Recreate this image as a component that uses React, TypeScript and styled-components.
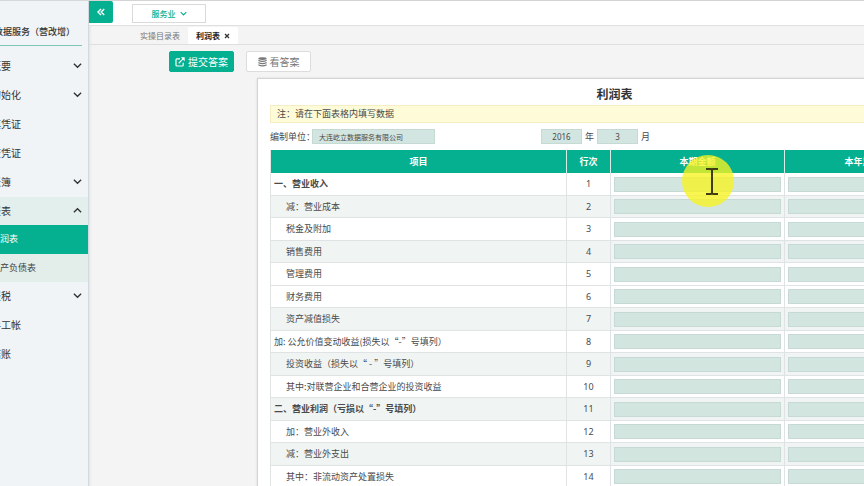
import React from "react";
import styled, { createGlobalStyle } from "styled-components";

const green = "#04b08f";
const line = "#e0e3e3";

const Global = createGlobalStyle`
  * { box-sizing: border-box; }
  html, body, #root { height: 100%; }
  body {
    margin: 0;
    overflow: hidden;
    background: #f4f4f4;
    color: #4a4a4a;
    font-family: "Noto Sans CJK SC", "Noto Sans", sans-serif;
    font-size: 9px;
  }
  button, input { font: inherit; color: inherit; }
`;

const Shell = styled.div`
  display: flex;
  min-height: 100%;
  border-top: 1px solid #d4d4d4;
`;

const Sidebar = styled.aside`
  flex: none;
  width: 89px;
  display: flex;
  justify-content: flex-end;
  overflow: hidden;
  background: #f0f4f7;
  border-right: 1px solid #d3d9dc;
  box-shadow: 1px 0 2px #dde0e2;
`;

const SidebarInner = styled.div`
  flex: none;
  width: 150px;
`;

const Company = styled.h1`
  margin: 0 6px 6px 0;
  height: 45px;
  padding: 17px 0 0 20px;
  border-bottom: 1px solid #7cc7b6;
  font-size: 9px;
  line-height: 28px;
  font-weight: 500;
  color: #333;
  white-space: nowrap;
`;

const Menu = styled.nav`
  display: flex;
  flex-direction: column;
`;

const menuRow = `
  display: flex;
  align-items: center;
  justify-content: space-between;
  width: 100%;
  padding: 0 6px 2px 53px;
  border: 0;
  text-decoration: none;
  white-space: nowrap;
`;

const MenuButton = styled.button<{ $open?: boolean }>`
  ${menuRow}
  height: ${(p) => (p.$open ? 28 : 29)}px;
  background: ${(p) => (p.$open ? "#e3efed" : "transparent")};
  font-size: 10px;
  color: #333;
`;

const MenuLink = styled.a`
  ${menuRow}
  height: 29px;
  font-size: 10px;
  color: #333;
`;

const SubLink = styled.a<{ $active?: boolean }>`
  ${menuRow}
  height: ${(p) => (p.$active ? 29 : 28)}px;
  font-size: 9px;
  background: ${(p) => (p.$active ? green : "#e3eeea")};
  color: ${(p) => (p.$active ? "#fff" : "#444")};
`;

const Main = styled.main`
  position: relative;
  flex: 1;
  min-width: 0;
  overflow: hidden;
`;

const TopBar = styled.header`
  display: flex;
  align-items: center;
  height: 24px;
  gap: 19px;
  background: #fff;
`;

const Collapse = styled.button`
  display: flex;
  align-items: center;
  justify-content: center;
  align-self: flex-start;
  width: 24px;
  height: 22px;
  padding: 0;
  border: 0;
  border-radius: 0 2px 2px 0;
  background: ${green};
  color: #fff;
`;

const Industry = styled.button`
  display: flex;
  align-items: center;
  justify-content: center;
  gap: 4px;
  width: 74px;
  height: 19px;
  padding: 0;
  border: 1px solid #dadada;
  background: #fff;
  font-size: 8px;
  font-weight: 500;
  color: ${green};
`;

const Tabs = styled.nav`
  display: flex;
  align-items: flex-end;
  height: 20px;
  padding-left: 43px;
  border-top: 1px solid #e0e0e0;
  border-bottom: 1px solid #dedede;
`;

const Tab = styled.div<{ $active?: boolean }>`
  display: flex;
  align-items: center;
  gap: 4px;
  height: 17px;
  padding: 0 8px;
  border-radius: 2px 2px 0 0;
  background: ${(p) => (p.$active ? "#fff" : "transparent")};
  font-size: 8px;
  font-weight: ${(p) => (p.$active ? 700 : 400)};
`;

const TabLink = styled.a<{ $active?: boolean }>`
  color: ${(p) => (p.$active ? "#222" : "#777")};
  text-decoration: none;
`;

const Close = styled.button`
  display: flex;
  padding: 0;
  border: 0;
  background: none;
  color: #333;
`;

const Actions = styled.div`
  display: flex;
  gap: 12px;
  padding: 6px 0 6px 80px;
`;

const Action = styled.button<{ $primary?: boolean }>`
  display: flex;
  align-items: center;
  justify-content: center;
  gap: 3px;
  width: 65px;
  height: 21px;
  padding: 0;
  border: 1px solid ${(p) => (p.$primary ? green : "#dcdcdc")};
  border-radius: 2px;
  background: ${(p) => (p.$primary ? green : "#fff")};
  color: ${(p) => (p.$primary ? "#fff" : "#777")};
  font-size: 10px;
`;

const Paper = styled.section`
  min-width: 716px;
  margin-left: 168px;
  padding: 0 13px 0 12px;
  border: 1px solid #d4d4d4;
  background: #fff;
  box-shadow: 0 0 2px #d8d8d8;
`;

const Title = styled.h2`
  margin: 0;
  padding-top: 4px;
  font-size: 12px;
  line-height: 22px;
  font-weight: 700;
  text-align: center;
  color: #333;
`;

const Note = styled.p`
  margin: 0;
  padding-left: 6px;
  border: 1px solid #f5edc4;
  background: #fefbd8;
  line-height: 16px;
`;

const Meta = styled.div`
  display: flex;
  align-items: center;
  height: 27px;
  gap: 3px;
`;

const MetaLabel = styled.label`
  width: 39px;
  white-space: nowrap;
`;

const MetaInput = styled.input<{ $wide?: boolean }>`
  width: ${(p) => (p.$wide ? 123 : 41)}px;
  height: 15px;
  padding: 0 6px;
  border: 1px solid #c6dad4;
  background: #d3e5e0;
  font-family: "Noto Sans", "Noto Sans CJK SC", sans-serif;
  font-size: ${(p) => (p.$wide ? 7 : 8)}px;
  text-align: ${(p) => (p.$wide ? "left" : "center")};
`;

const Period = styled.div`
  display: flex;
  align-items: center;
  gap: 3px;
  margin-left: 103px;
`;

const Table = styled.table`
  width: 100%;
  table-layout: fixed;
  border-collapse: separate;
  border-spacing: 0;
  border-left: 1px solid ${line};
`;

const Head = styled.th<{ $width?: number }>`
  width: ${(p) => (p.$width ? p.$width + "px" : "auto")};
  height: 23px;
  padding: 0;
  border-right: 1px solid #d5eee8;
  background: ${green};
  color: #fff;
  font-size: 9px;
  line-height: 12px;
  font-weight: 700;
`;

const Row = styled.tr<{ $shade: boolean; $tall: boolean }>`
  height: ${(p) => (p.$tall ? 23 : 22)}px;
  background: ${(p) => (p.$shade ? "#f0f4f3" : "#fff")};
`;

const Cell = styled.td<{ $indent?: boolean; $bold?: boolean }>`
  padding: 0 0 0 ${(p) => (p.$indent ? 15 : 3)}px;
  border-right: 1px solid ${line};
  border-bottom: 1px solid ${line};
  font-size: 9px;
  line-height: 12px;
  font-weight: ${(p) => (p.$bold ? 700 : 400)};
  white-space: nowrap;
`;

const NumberCell = styled(Cell)`
  padding: 0;
  font-family: "Noto Sans", sans-serif;
  text-align: center;
`;

const AmountCell = styled(Cell)`
  padding: 0 3px;
`;

const Amount = styled.input`
  display: block;
  width: 100%;
  height: 15px;
  padding: 0 4px;
  border: 1px solid #c6d9d4;
  background: #d2e5df;
`;

const Pointer = styled.div`
  position: absolute;
  left: 593px;
  top: 154px;
  width: 52px;
  height: 52px;
  pointer-events: none;
`;

function Chevron({ up = false, size = 9 }: { up?: boolean; size?: number }) {
  return (
    <svg width={size} height={size} viewBox="0 0 10 10" fill="none" stroke="currentColor" strokeWidth="1.5" aria-hidden="true">
      <path d={up ? "M1 7l4-4 4 4" : "M1 3l4 4 4-4"} />
    </svg>
  );
}

type Line = { text: string; kind: "total" | "plain" | "sub"; shade: boolean };

const lines: Line[] = [
  { text: "一、营业收入", kind: "total", shade: false },
  { text: "减：营业成本", kind: "sub", shade: true },
  { text: "税金及附加", kind: "sub", shade: false },
  { text: "销售费用", kind: "sub", shade: true },
  { text: "管理费用", kind: "sub", shade: false },
  { text: "财务费用", kind: "sub", shade: false },
  { text: "资产减值损失", kind: "sub", shade: true },
  { text: "加: 公允价值变动收益(损失以“-”号填列）", kind: "plain", shade: false },
  { text: "投资收益（损失以“ - ”号填列）", kind: "sub", shade: true },
  { text: "其中:对联营企业和合营企业的投资收益", kind: "sub", shade: false },
  { text: "二、营业利润（亏损以“-”号填列）", kind: "total", shade: true },
  { text: "加：营业外收入", kind: "sub", shade: false },
  { text: "减：营业外支出", kind: "sub", shade: true },
  { text: "其中：非流动资产处置损失", kind: "sub", shade: false },
];

export default function App() {
  return (
    <>
      <Global />
      <Shell lang="zh-CN">
        <Sidebar>
          <SidebarInner>
            <Company>大连屹立数据服务（营改增）</Company>
            <Menu>
              <MenuButton>概要<Chevron /></MenuButton>
              <MenuButton>初始化<Chevron /></MenuButton>
              <MenuLink href="#entry">填凭证</MenuLink>
              <MenuLink href="#review">查凭证</MenuLink>
              <MenuButton>账簿<Chevron /></MenuButton>
              <MenuButton $open aria-expanded="true">报表<Chevron up /></MenuButton>
              <SubLink href="#profit" $active>利润表</SubLink>
              <SubLink href="#balance">资产负债表</SubLink>
              <MenuButton>报税<Chevron /></MenuButton>
              <MenuLink href="#manual">手工帐</MenuLink>
              <MenuLink href="#close">结账</MenuLink>
            </Menu>
          </SidebarInner>
        </Sidebar>
        <Main>
          <TopBar>
            <Collapse aria-label="收起菜单">
              <svg width="8" height="8" viewBox="0 0 8 8" fill="none" stroke="currentColor" strokeWidth="1.4" aria-hidden="true">
                <path d="M4 1L1 4l3 3M7.200 1l-3 3 3 3" />
              </svg>
            </Collapse>
            <Industry>服务业<Chevron size={7} /></Industry>
          </TopBar>
          <Tabs>
            <Tab><TabLink href="#list">实操目录表</TabLink></Tab>
            <Tab $active>
              <TabLink href="#profit" $active>利润表</TabLink>
              <Close aria-label="关闭">
                <svg width="6" height="6" viewBox="0 0 6 6" stroke="currentColor" strokeWidth="1.3" aria-hidden="true">
                  <path d="M1 1l4 4M5 1L1 5" />
                </svg>
              </Close>
            </Tab>
          </Tabs>
          <Actions>
            <Action $primary>
              <svg width="10" height="10" viewBox="0 0 12 12" fill="none" stroke="currentColor" strokeWidth="1.4" aria-hidden="true">
                <path d="M6 2.200H2.200a1 1 0 0 0-1 1v6.600a1 1 0 0 0 1 1h6.600a1 1 0 0 0 1-1V7M4.500 7.500L10 2" />
                <path d="M7 .4h4.600V5z" fill="currentColor" stroke="none" />
              </svg>
              提交答案
            </Action>
            <Action>
              <svg width="9" height="10" viewBox="0 0 10 11" fill="currentColor" aria-hidden="true">
                <ellipse cx="5" cy="1.700" rx="4.600" ry="1.600" />
                <path d="M.4 3q4.600 2 9.200 0v1.300q-4.600 2.200-9.200 0zM.4 5.500q4.600 2 9.200 0v1.300q-4.600 2.200-9.200 0zM.4 8q4.600 2 9.200 0v1.500q-4.600 2.200-9.200 0z" />
              </svg>
              看答案
            </Action>
          </Actions>
          <Paper>
            <Title>利润表</Title>
            <Note>注：请在下面表格内填写数据</Note>
            <Meta>
              <MetaLabel htmlFor="company">编制单位：</MetaLabel>
              <MetaInput id="company" $wide defaultValue="大连屹立数据服务有限公司" />
              <Period>
                <MetaInput id="year" defaultValue="2016" />
                <label htmlFor="year">年</label>
                <MetaInput id="month" defaultValue="3" />
                <label htmlFor="month">月</label>
              </Period>
            </Meta>
            <Table>
              <thead>
                <tr>
                  <Head>项目</Head>
                  <Head $width={44}>行次</Head>
                  <Head $width={174}>本期金额</Head>
                  <Head $width={174}>本年累计金额</Head>
                </tr>
              </thead>
              <tbody>
                {lines.map((item, i) => (
                  <Row key={item.text} $shade={item.shade} $tall={i % 2 === 0}>
                    <Cell $indent={item.kind === "sub"} $bold={item.kind === "total"}>{item.text}</Cell>
                    <NumberCell>{i + 1}</NumberCell>
                    <AmountCell><Amount aria-label={item.text + " 本期金额"} /></AmountCell>
                    <AmountCell><Amount aria-label={item.text + " 本年累计金额"} /></AmountCell>
                  </Row>
                ))}
              </tbody>
            </Table>
          </Paper>
          <Pointer>
            <svg width="52" height="52" viewBox="0 0 52 52" aria-hidden="true">
              <circle cx="26" cy="26" r="26" fill="#f8f420" fillOpacity="0.78" />
              <path d="M24 14h5l1 1 1-1h5M30 15v23M24 39h5l1-1 1 1h5" fill="none" stroke="#403d14" strokeWidth="2" />
            </svg>
          </Pointer>
        </Main>
      </Shell>
    </>
  );
}
